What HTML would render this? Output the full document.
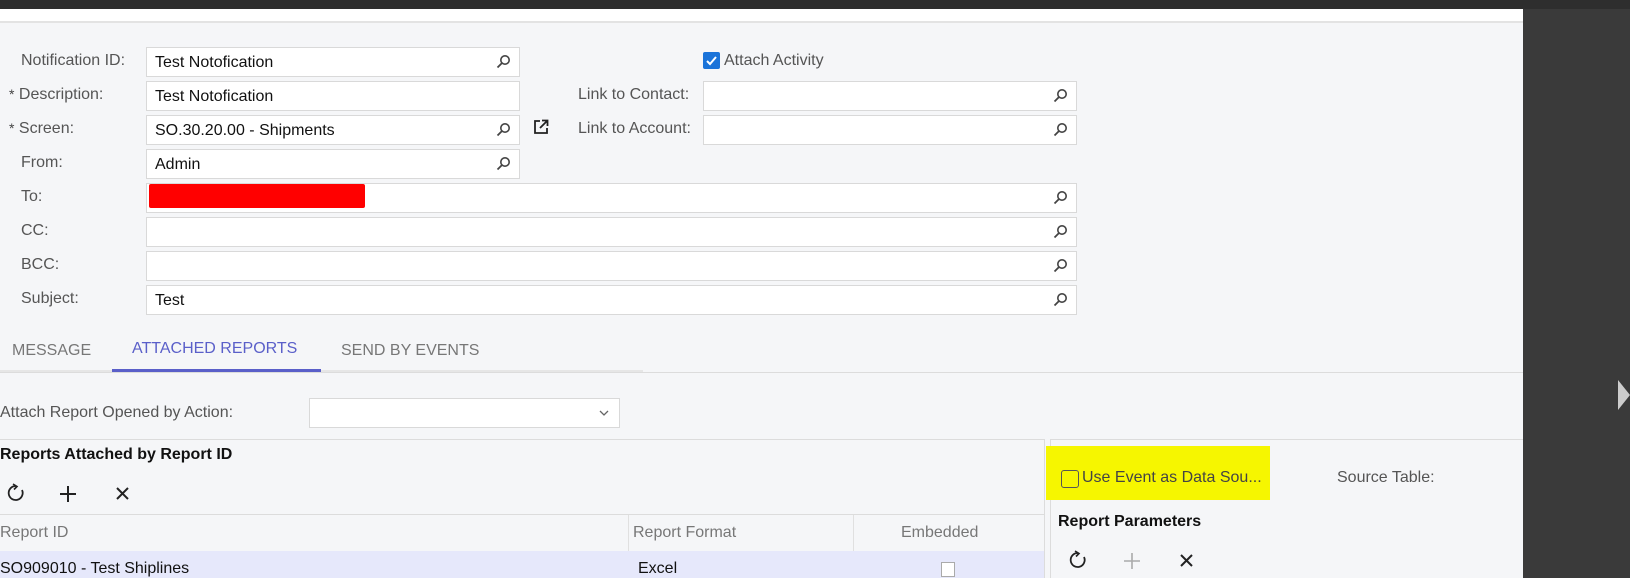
<!DOCTYPE html>
<html><head><meta charset="utf-8"><style>
*{box-sizing:border-box;margin:0;padding:0}
body{width:1630px;height:578px;overflow:hidden;background:#3a3a3a;font-family:"Liberation Sans",sans-serif;font-size:16px;position:relative}
.a{position:absolute}
.main{left:0;top:9px;width:1523px;height:569px;background:#f5f6f8}
.lbl{color:#555;font-size:16px}
.inp{position:absolute;background:#fff;border:1px solid #d9d9d9;height:30px;color:#111;padding:6px 8px;font-size:16px}
.s{position:absolute;right:8px;top:6px}
.star{color:#444;font-size:14px}
</style></head><body>
<div class="a" style="left:0;top:0;width:1630px;height:9px;background:#2e2e2e"></div>
<div class="a main"></div>
<div class="a" style="left:0;top:9px;width:1523px;height:14px;background:#fff;border-bottom:2px solid #e3e3e3"></div>

<svg width="0" height="0" style="position:absolute"><defs><symbol id="srch" viewBox="0 0 16 16"><circle cx="10" cy="6" r="4.2" fill="none" stroke="#444" stroke-width="1.6"/><path d="M7 9 L2.5 13.5" stroke="#444" stroke-width="1.8"/></symbol></defs></svg>

<div class="a lbl" style="left:21px;top:52px">Notification ID:</div>
<div class="a lbl" style="left:9px;top:86px"><span class="star">*</span> Description:</div>
<div class="a lbl" style="left:9px;top:120px"><span class="star">*</span> Screen:</div>
<div class="a lbl" style="left:21px;top:154px">From:</div>
<div class="a lbl" style="left:21px;top:188px">To:</div>
<div class="a lbl" style="left:21px;top:222px">CC:</div>
<div class="a lbl" style="left:21px;top:256px">BCC:</div>
<div class="a lbl" style="left:21px;top:290px">Subject:</div>

<div class="inp" style="left:146px;top:47px;width:374px">Test Notofication<svg class="s" width="16" height="16"><use href="#srch"/></svg></div>
<div class="inp" style="left:146px;top:81px;width:374px">Test Notofication</div>
<div class="inp" style="left:146px;top:115px;width:374px">SO.30.20.00 - Shipments<svg class="s" width="16" height="16"><use href="#srch"/></svg></div>
<div class="inp" style="left:146px;top:149px;width:374px">Admin<svg class="s" width="16" height="16"><use href="#srch"/></svg></div>
<div class="inp" style="left:146px;top:183px;width:931px"><div class="a" style="left:2px;top:0;width:216px;height:24px;background:#f00;border-radius:2px"></div><svg class="s" width="16" height="16"><use href="#srch"/></svg></div>
<div class="inp" style="left:146px;top:217px;width:931px"><svg class="s" width="16" height="16"><use href="#srch"/></svg></div>
<div class="inp" style="left:146px;top:251px;width:931px"><svg class="s" width="16" height="16"><use href="#srch"/></svg></div>
<div class="inp" style="left:146px;top:285px;width:931px">Test<svg class="s" width="16" height="16"><use href="#srch"/></svg></div>

<svg class="a" style="left:532px;top:118px" width="18" height="18" viewBox="0 0 18 18"><path d="M8 3H3v12h12v-5" fill="none" stroke="#222" stroke-width="1.8"/><path d="M8 10 L15 3 M10 2.5h5.5v5.5" fill="none" stroke="#222" stroke-width="1.8"/></svg>

<div class="a" style="left:703px;top:52px;width:17px;height:17px;background:#1a73d9;border-radius:2px"><svg width="17" height="17"><path d="M4 9l3 3 6-7" fill="none" stroke="#fff" stroke-width="2"/></svg></div>
<div class="a lbl" style="left:724px;top:52px">Attach Activity</div>
<div class="a lbl" style="left:578px;top:86px">Link to Contact:</div>
<div class="a lbl" style="left:578px;top:120px">Link to Account:</div>
<div class="inp" style="left:703px;top:81px;width:374px"><svg class="s" width="16" height="16"><use href="#srch"/></svg></div>
<div class="inp" style="left:703px;top:115px;width:374px"><svg class="s" width="16" height="16"><use href="#srch"/></svg></div>

<div class="a" style="left:0;top:372px;width:1523px;height:1px;background:#dcdcdc"></div>
<div class="a" style="left:0;top:370px;width:643px;height:2px;background:#e6e6e6"></div>
<div class="a lbl" style="left:12px;top:342px;color:#777">MESSAGE</div>
<div class="a" style="left:132px;top:340px;color:#5a5fc9">ATTACHED REPORTS</div>
<div class="a" style="left:112px;top:369px;width:209px;height:3px;background:#5a5fc9"></div>
<div class="a lbl" style="left:341px;top:342px;color:#777">SEND BY EVENTS</div>

<div class="a lbl" style="left:0;top:404px">Attach Report Opened by Action:</div>
<div class="inp" style="left:309px;top:398px;width:311px;height:30px"><svg class="a" style="right:10px;top:11px" width="10" height="7"><path d="M1 1l4 4 4-4" fill="none" stroke="#666" stroke-width="1.3"/></svg></div>

<div class="a" style="left:0;top:439px;width:1044px;height:1px;background:#dcdcdc"></div>
<div class="a" style="left:1044px;top:439px;width:1px;height:139px;background:#dcdcdc"></div>
<div class="a" style="left:1050px;top:439px;width:473px;height:1px;background:#dcdcdc"></div>
<div class="a" style="left:1050px;top:439px;width:1px;height:139px;background:#dcdcdc"></div>
<div class="a" style="left:0;top:446px;font-weight:bold;color:#111">Reports Attached by Report ID</div>
<svg class="a" style="left:5px;top:482px" width="140" height="22" viewBox="0 0 140 22"><path d="M11 4 A7 7 0 1 0 17 8" fill="none" stroke="#222" stroke-width="1.8"/><path d="M8 2l4 2.5-3 3" fill="none" stroke="#222" stroke-width="1.6"/><path d="M63 4v16M55 12h16" stroke="#222" stroke-width="2"/><path d="M112 6l11 11M123 6l-11 11" stroke="#222" stroke-width="2"/></svg>
<div class="a" style="left:0;top:514px;width:1044px;height:1px;background:#dcdcdc"></div>
<div class="a lbl" style="left:0;top:524px;color:#777">Report ID</div>
<div class="a" style="left:628px;top:515px;width:1px;height:36px;background:#e0e0e0"></div>
<div class="a lbl" style="left:633px;top:524px;color:#777">Report Format</div>
<div class="a" style="left:853px;top:515px;width:1px;height:36px;background:#e0e0e0"></div>
<div class="a lbl" style="left:901px;top:524px;color:#777">Embedded</div>
<div class="a" style="left:0;top:551px;width:1044px;height:27px;background:#e6e8fb"></div>
<div class="a" style="left:0;top:560px;color:#111">SO909010 - Test Shiplines</div>
<div class="a" style="left:638px;top:560px;color:#111">Excel</div>
<div class="a" style="left:941px;top:562px;width:14px;height:15px;border:1px solid #aaa;background:#fff"></div>

<div class="a" style="left:1046px;top:446px;width:224px;height:54px;background:#f6f600"></div>
<div class="a" style="left:1061px;top:470px;width:18px;height:18px;border:1.5px solid #555;border-radius:3px"></div>
<div class="a" style="left:1082px;top:469px;color:#444">Use Event as Data Sou...</div>
<div class="a lbl" style="left:1337px;top:469px">Source Table:</div>
<div class="a" style="left:1058px;top:513px;font-weight:bold;color:#111">Report Parameters</div>
<svg class="a" style="left:1068px;top:548px" width="140" height="24" viewBox="0 0 140 24"><path d="M10 5 A7 7 0 1 0 16 9" fill="none" stroke="#222" stroke-width="1.8"/><path d="M7 3l4 2.5-3 3" fill="none" stroke="#222" stroke-width="1.6"/><path d="M64 5v16M56 13h16" stroke="#aaa" stroke-width="1.6"/><path d="M113 7l11 11M124 7l-11 11" stroke="#222" stroke-width="2"/></svg>

<svg class="a" style="left:1618px;top:380px" width="12" height="30"><path d="M0 0L12 15L0 30Z" fill="#ccc"/></svg>
</body></html>
